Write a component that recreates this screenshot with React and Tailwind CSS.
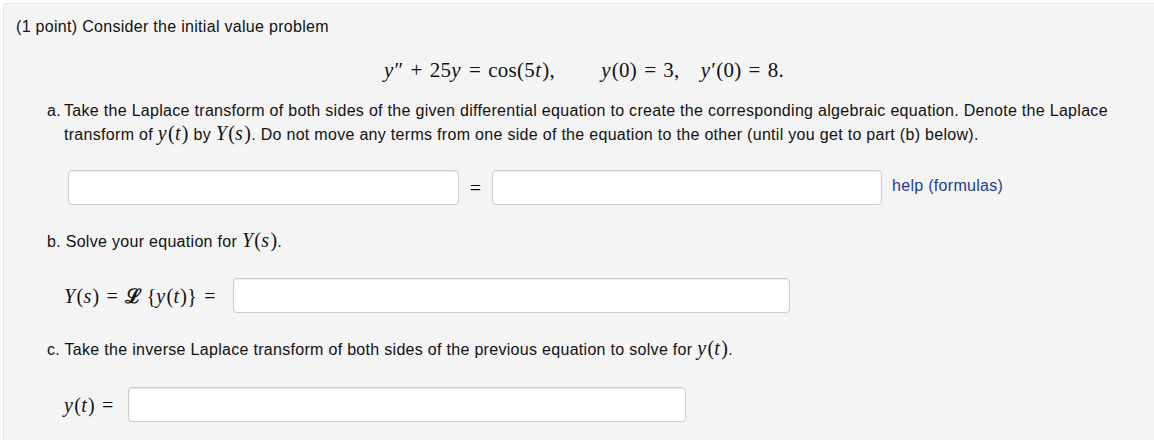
import React from 'react';

const sans = { fontFamily: '"Liberation Sans", Arial, sans-serif' };
const serif = { fontFamily: '"Liberation Serif", "Times New Roman", serif' };

// math italic / upright helpers
const I = ({ children }) => (
  <span className="italic pr-[1px]" style={serif}>
    {children}
  </span>
);
const R = ({ children }) => <span style={serif}>{children}</span>;
const Op = ({ children, gap = 'mx-[6px]' }) => <span className={gap}>{children}</span>;

const Math = ({ children, className = '', size = 'text-[20px]' }) => (
  <span className={`${size} leading-[20px] tracking-[0.3px] ${className}`} style={serif}>
    {children}
  </span>
);

const Box = ({ width }) => (
  <div
    className={`h-[35px] bg-white border border-[#cccccc] rounded-[4px] shadow-[inset_0_1px_1px_rgba(0,0,0,0.075)] ${width}`}
  />
);

const App = () => {
  return (
    <div className="bg-white min-h-[440px] pt-[3px] pl-[3px]" style={sans}>
      <div className="bg-[#f4f4f4] border-t border-l border-[#e2e2e2] rounded-tl-[4px] h-[437px] pt-[13px] pl-[12px] text-[16px] tracking-[0.3px] text-[#111]">
        <p className="leading-[20px] h-[20px]">(1 point) Consider the initial value problem</p>

        {/* display equation */}
        <div className="mt-[21px] h-[24px] flex justify-center items-center pr-[2px]">
          <Math size="text-[21px]">
            <I>y</I>
            <R>″</R>
            <Op gap="mx-[7px]">+</Op>
            <R>25</R>
            <I>y</I>
            <Op gap="mx-[7px]">=</Op>
            <R>cos(5</R>
            <I>t</I>
            <R>),</R>
            <span className="inline-block w-[46px]" />
            <I>y</I>
            <R>(0)</R>
            <Op gap="mx-[7px]">=</Op>
            <R>3,</R>
            <span className="inline-block w-[21px]" />
            <I>y</I>
            <R>′(0)</R>
            <Op gap="mx-[7px]">=</Op>
            <R>8.</R>
          </Math>
        </div>

        <div className="mt-[17px] pl-[31px] pr-[30px] flex">
          <span className="w-[17px] shrink-0 leading-[24px]">a.</span>
          <p className="leading-[24px]">
            Take the Laplace transform of both sides of the given differential equation to create the
            corresponding algebraic equation. Denote the Laplace transform of{' '}
            <Math>
              <I>y</I>(<I>t</I>)
            </Math>{' '}
            by{' '}
            <Math>
              <I>Y</I>(<I>s</I>)
            </Math>
            . Do not move any terms from one side of the equation to the other (until you get to part (b)
            below).
          </p>
        </div>

        <div className="mt-[23px] pl-[52px] flex items-center h-[35px]">
          <Box width="w-[391px]" />
          <span className="w-[33px] text-center text-[20px]" style={serif}>
            =
          </span>
          <Box width="w-[390px]" />
          <a className="ml-[10px] text-[#1c3d8f] leading-[20px] mb-[4px]">help (formulas)</a>
        </div>

        <div className="mt-[25px] pl-[31px] leading-[24px] h-[24px]">
          b. Solve your equation for{' '}
          <Math>
            <I>Y</I>(<I>s</I>)
          </Math>
          .
        </div>

        <div className="mt-[24px] pl-[48px] flex items-center h-[35px]">
          <Math className="mr-[10px]" size="text-[20px]">
            <I>Y</I>(<I>s</I>)<Op gap="mx-[7px]">=</Op>
            <span className="font-bold" style={{ fontFamily: '"DejaVu Serif", serif' }}>ℒ</span>
            <span className="ml-[4px]">{'{'}</span>
            <I>y</I>(<I>t</I>)<span>{'}'}</span>
            <Op gap="mx-[7px]">=</Op>
          </Math>
          <Box width="w-[557px]" />
        </div>

        <div className="mt-[25px] pl-[31px] leading-[24px] h-[24px]">
          c. Take the inverse Laplace transform of both sides of the previous equation to solve for{' '}
          <Math>
            <I>y</I>(<I>t</I>)
          </Math>
          .
        </div>

        <div className="mt-[25px] pl-[48px] flex items-center h-[35px]">
          <Math className="mr-[7px]">
            <I>y</I>(<I>t</I>)<Op gap="mx-[7px]">=</Op>
          </Math>
          <Box width="w-[558px]" />
        </div>
      </div>
    </div>
  );
};

export default App;
